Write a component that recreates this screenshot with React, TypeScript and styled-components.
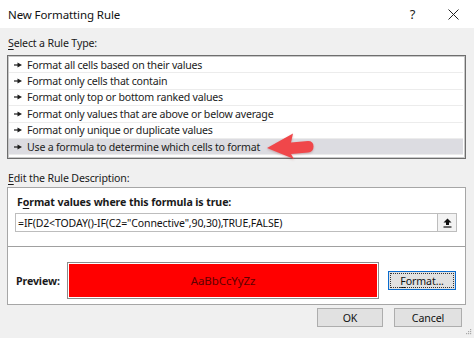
import React from "react";
import styled, { createGlobalStyle } from "styled-components";

const GlobalStyle = createGlobalStyle`
  html, body {
    margin: 0;
    padding: 0;
    background: #f0f0f0;
  }
  body {
    font-family: "Noto Sans", "Open Sans", sans-serif;
    color: #1a1a1a;
  }
`;

const Dialog = styled.div`
  position: relative;
  width: 474px;
  height: 338px;
  display: flex;
  flex-direction: column;
  background: #f0f0f0;
  overflow: hidden;
`;

const TitleBar = styled.div`
  height: 28px;
  display: flex;
  align-items: center;
  padding-left: 8px;
  background: #ffffff;
  font-size: 11.5px;
  letter-spacing: -0.1px;
  color: #111;
`;

const Title = styled.span`
  flex: 1;
`;

const TitleButton = styled.span`
  width: 41px;
  display: flex;
  align-items: center;
  justify-content: center;
  font-size: 13px;
  color: #222;
`;

const Body = styled.div`
  display: flex;
  flex-direction: column;
  padding: 0 8px 0 7px;
  flex: 1;
`;

const SectionLabel = styled.div<{ $top: number }>`
  margin-top: ${(p) => p.$top}px;
  height: 14px;
  line-height: 14px;
  font-size: 10.6px;
  letter-spacing: -0.15px;
  padding-left: 1px;
  u {
    text-decoration-thickness: 1px;
    text-underline-offset: 2px;
  }
`;

const ListWrap = styled.div`
  position: relative;
  margin-top: 5px;
`;

const RuleList = styled.div`
  background: #ffffff;
  border: 1px solid #6e6e6e;
  box-shadow: inset 0 0 0 1px #c8c8c8;
  padding: 1px 2px 3px 1px;
  display: flex;
  flex-direction: column;
`;

const RuleItem = styled.div<{ $selected?: boolean }>`
  height: 16.4px;
  box-sizing: border-box;
  display: flex;
  align-items: center;
  gap: 5px;
  padding-left: 5px;
  border-bottom: 1px solid #ececec;
  background: ${(p) => (p.$selected ? "#dcdce1" : "#ffffff")};
  font-size: 10.6px;
  letter-spacing: -0.22px;
  color: #1c1c1c;
  white-space: nowrap;
`;

const Callout = styled.svg`
  position: absolute;
  left: 255px;
  top: 75px;
  filter: drop-shadow(0 1px 1px rgba(120, 0, 0, 0.25));
`;

const Panel = styled.div`
  margin-top: 2px;
  background: #ffffff;
  border: 1px solid #a6a6a6;
  display: flex;
  flex-direction: column;
`;

const PanelTop = styled.div`
  padding: 7px 8px 14px 7px;
  border-bottom: 1px solid #a0a0a0;
`;

const BoldLabel = styled.div`
  height: 14px;
  line-height: 14px;
  font-size: 10.6px;
  font-weight: 700;
  letter-spacing: -0.1px;
  padding-left: 2px;
  u {
    text-decoration-thickness: 1px;
    text-underline-offset: 2px;
  }
`;

const FormulaField = styled.div`
  margin-top: 4px;
  height: 19px;
  box-sizing: border-box;
  border: 1px solid #bdbdbd;
  display: flex;
  align-items: stretch;
`;

const FormulaText = styled.div`
  flex: 1;
  display: flex;
  align-items: center;
  padding-left: 2px;
  font-size: 10.5px;
  letter-spacing: -0.12px;
  white-space: nowrap;
  color: #111;
`;

const PickButton = styled.div`
  width: 19px;
  box-sizing: border-box;
  border-left: 1px solid #bdbdbd;
  background: #f3f3f3;
  display: flex;
  align-items: center;
  justify-content: center;
`;

const PreviewRow = styled.div`
  display: flex;
  align-items: center;
  padding: 15px 9px 5px 8px;
`;

const PreviewLabel = styled.div`
  width: 51px;
  font-size: 10.6px;
  font-weight: 700;
  letter-spacing: -0.1px;
`;

const PreviewBox = styled.div`
  width: 313px;
  height: 37px;
  box-sizing: border-box;
  border: 1px solid #8c8c8c;
  padding: 1px;
  background: #ffffff;
`;

const PreviewFill = styled.div`
  height: 100%;
  background: #ff0000;
  display: flex;
  align-items: center;
  justify-content: center;
  font-size: 11.5px;
  letter-spacing: -0.1px;
  color: #5e0000;
`;

const Button = styled.div<{ $focused?: boolean; $width: number }>`
  width: ${(p) => p.$width}px;
  height: 19px;
  box-sizing: border-box;
  display: flex;
  align-items: center;
  justify-content: center;
  background: #e1e1e1;
  border: 1px solid ${(p) => (p.$focused ? "#0a6ccf" : "#adadad")};
  outline: ${(p) => (p.$focused ? "1px dotted #333" : "none")};
  outline-offset: -3px;
  font-size: 10.6px;
  letter-spacing: -0.1px;
  color: #111;
  u {
    text-decoration-thickness: 1px;
    text-underline-offset: 2px;
  }
`;

const FormatButton = styled(Button)`
  margin-left: 9px;
`;

const Footer = styled.div`
  display: flex;
  justify-content: flex-end;
  gap: 11px;
  padding: 3px 4px 0 0;
`;

const Grip = styled.svg`
  position: absolute;
  right: 2px;
  bottom: 3px;
`;

const Bullet = () => (
  <svg width="8" height="6" viewBox="0 0 8 6">
    <path d="M0 3h4" stroke="#1c1c1c" strokeWidth="1.2" />
    <path d="M3.5 0.5L8 3L3.5 5.5Z" fill="#1c1c1c" />
  </svg>
);

const rules = [
  "Format all cells based on their values",
  "Format only cells that contain",
  "Format only top or bottom ranked values",
  "Format only values that are above or below average",
  "Format only unique or duplicate values",
  "Use a formula to determine which cells to format",
];

const App = () => {
  return (
    <>
      <GlobalStyle />
      <Dialog>
        <TitleBar>
          <Title>New Formatting Rule</Title>
          <TitleButton>?</TitleButton>
          <TitleButton>
            <svg width="11" height="11" viewBox="0 0 11 11">
              <path d="M0.5 0.5L10.5 10.5M10.5 0.5L0.5 10.5" stroke="#222" strokeWidth="1" />
            </svg>
          </TitleButton>
        </TitleBar>

        <Body>
          <SectionLabel $top={8}>
            <u>S</u>elect a Rule Type:
          </SectionLabel>

          <ListWrap>
            <RuleList>
              {rules.map((r, i) => (
                <RuleItem key={r} $selected={i === rules.length - 1}>
                  <Bullet />
                  {r}
                </RuleItem>
              ))}
            </RuleList>
            <Callout width="56" height="32" viewBox="262 130 56 32">
              <path
                d="M267 148 L293 133.5 L291 142.5 L308 141 Q313.5 141 313.5 146.5 Q313.5 152 308 152.5 L291 154 L294 159 Z"
                fill="#f0474a"
              />
            </Callout>
          </ListWrap>

          <SectionLabel $top={12}>
            <u>E</u>dit the Rule Description:
          </SectionLabel>

          <Panel>
            <PanelTop>
              <BoldLabel>
                F<u>o</u>rmat values where this formula is true:
              </BoldLabel>
              <FormulaField>
                <FormulaText>
                  =IF(D2&lt;TODAY()-IF(C2="Connective",90,30),TRUE,FALSE)
                </FormulaText>
                <PickButton>
                  <svg width="9" height="10" viewBox="0 0 9 10">
                    <path d="M4.5 0.5L8.5 4.5H6V7H3V4.5H0.5Z" fill="#111" />
                    <path d="M0.5 9h8" stroke="#111" strokeWidth="1.2" />
                  </svg>
                </PickButton>
              </FormulaField>
            </PanelTop>

            <PreviewRow>
              <PreviewLabel>Preview:</PreviewLabel>
              <PreviewBox>
                <PreviewFill>AaBbCcYyZz</PreviewFill>
              </PreviewBox>
              <FormatButton $focused $width={68}>
                <u>F</u>ormat...
              </FormatButton>
            </PreviewRow>
          </Panel>

          <Footer>
            <Button $width={66}>OK</Button>
            <Button $width={68}>Cancel</Button>
          </Footer>
        </Body>

        <Grip width="7" height="7" viewBox="0 0 7 7">
          <rect x="5" y="1" width="1.2" height="1.2" fill="#a8a8a8" />
          <rect x="3" y="3" width="1.2" height="1.2" fill="#a8a8a8" />
          <rect x="5" y="3" width="1.2" height="1.2" fill="#a8a8a8" />
          <rect x="1" y="5" width="1.2" height="1.2" fill="#a8a8a8" />
          <rect x="3" y="5" width="1.2" height="1.2" fill="#a8a8a8" />
          <rect x="5" y="5" width="1.2" height="1.2" fill="#a8a8a8" />
        </Grip>
      </Dialog>
    </>
  );
};

export default App;
